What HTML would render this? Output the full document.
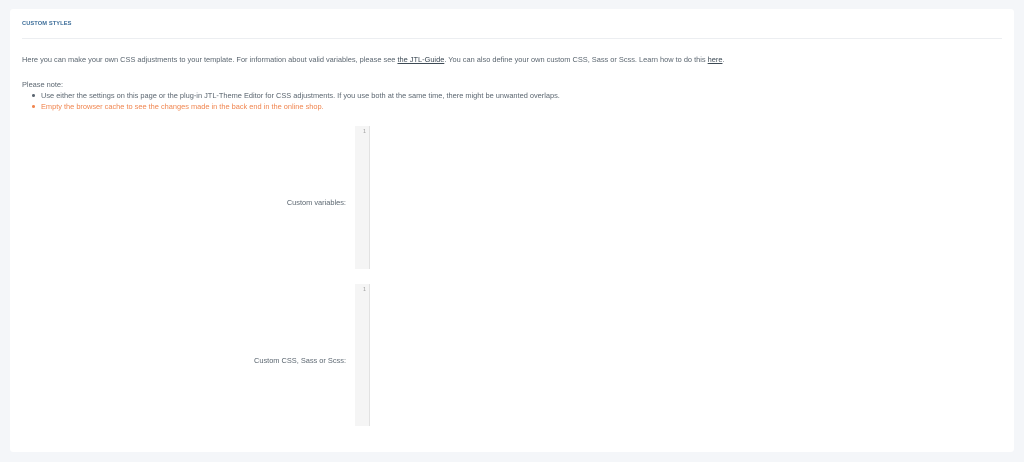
<!DOCTYPE html>
<html><head><style>
body{margin:0;width:1024px;height:462px;background:#f4f6f9;font-family:"Liberation Sans",sans-serif;color:#5b6670;overflow:hidden;position:relative}
.card{position:absolute;left:10px;top:9px;width:1004px;height:443px;background:#fff;border-radius:3px}
.t{position:absolute;white-space:nowrap;font-size:7.4px}
.h{left:12px;top:12px;font-size:5.7px;font-weight:bold;color:#3c6d99;letter-spacing:.1px}
.hr{position:absolute;left:12px;right:12px;top:29px;border-top:1px solid #eceef1}
a{color:#3d4a55;text-decoration:underline}
.dot{position:absolute;width:3px;height:3px;border-radius:50%;background:#5b6670}
.g{position:absolute;left:345px;width:14px;background:#f5f5f5;border-right:1px solid #e2e2e2}
.g span{position:absolute;right:3px;top:3px;font-size:5.5px;color:#999}
</style></head><body>
<div class="card">
<div class="t h">CUSTOM STYLES</div>
<div class="hr"></div>
<div class="t" style="left:12px;top:46px">Here you can make your own CSS adjustments to your template. For information about valid variables, please see <a>the JTL-Guide</a>. You can also define your own custom CSS, Sass or Scss. Learn how to do this <a>here</a>.</div>
<div class="t" style="left:12px;top:71px">Please note:</div>
<div class="dot" style="left:22px;top:85px"></div>
<div class="t" style="left:31px;top:82px">Use either the settings on this page or the plug-in JTL-Theme Editor for CSS adjustments. If you use both at the same time, there might be unwanted overlaps.</div>
<div class="dot" style="left:22px;top:96px;background:#f0854f"></div>
<div class="t" style="left:31px;top:93px;color:#f0854f">Empty the browser cache to see the changes made in the back end in the online shop.</div>
<div class="g" style="top:117px;height:143px"><span>1</span></div>
<div class="t" style="right:668px;top:189px">Custom variables:</div>
<div class="g" style="top:275px;height:142px"><span>1</span></div>
<div class="t" style="right:668px;top:347px">Custom CSS, Sass or Scss:</div>
</div>
</body></html>
